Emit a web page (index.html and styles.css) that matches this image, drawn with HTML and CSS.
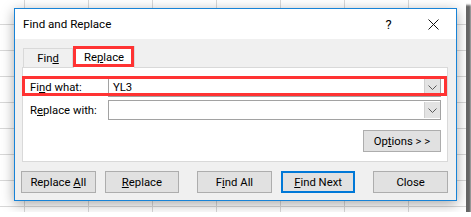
FILE: index.html
```html
<!DOCTYPE html>
<html>
<head>
<meta charset="utf-8">
<link rel="stylesheet" href="styles.css">
</head>
<body>
<div class="sheet">
  <div class="dialog">
    <div class="titlebar">
      <span class="title">Find and Replace</span>
      <span class="tbtn help">?</span>
      <span class="tbtn close"><svg width="11" height="11" viewBox="0 0 11 11"><path d="M0.5 0.5L10.5 10.5M10.5 0.5L0.5 10.5" stroke="#111" stroke-width="1" fill="none"/></svg></span>
    </div>
    <div class="content">
      <div class="tabs">
        <div class="tab"><span>Fin<u>d</u></span></div>
        <div class="tab active"><span>Re<u>p</u>lace</span></div>
      </div>
      <div class="panel">
        <div class="row hl">
          <div class="label">Fi<u>n</u>d what:</div>
          <div class="combo"><span class="val">YL3</span><span class="drop"><svg width="9" height="5" viewBox="0 0 9 5"><path d="M0.5 0.5L4.5 4.5L8.5 0.5" stroke="#5a5a5a" stroke-width="1" fill="none"/></svg></span></div>
        </div>
        <div class="row">
          <div class="label">R<u>e</u>place with:</div>
          <div class="combo"><span class="val"></span><span class="drop"><svg width="9" height="5" viewBox="0 0 9 5"><path d="M0.5 0.5L4.5 4.5L8.5 0.5" stroke="#5a5a5a" stroke-width="1" fill="none"/></svg></span></div>
        </div>
        <div class="opts"><div class="btn opt"><span>Op<u>t</u>ions &gt; &gt;</span></div></div>
      </div>
      <div class="buttons">
        <div class="btn"><span>Replace <u>A</u>ll</span></div>
        <div class="btn gs"><span><u>R</u>eplace</span></div>
        <div class="btn gl"><span>F<u>i</u>nd All</span></div>
        <div class="btn gs default"><span><u>F</u>ind Next</span></div>
        <div class="btn gl"><span>Close</span></div>
      </div>
    </div>
  </div>
</div>
</body>
</html>
```
FILE: styles.css
```css
html, body {
  margin: 0;
  background: #fff;
}
body {
  font-family: Roboto, "Noto Sans", sans-serif;
  font-size: 11.3px;
  color: #000;
}
u {
  text-decoration: underline;
  text-underline-offset: 1px;
}
.sheet {
  width: 466px;
  height: 212px;
  box-sizing: border-box;
  padding: 8px 0 0 14px;
  background-color: #fff;
  background-image:
    linear-gradient(to right, #d8d8d8 1px, transparent 1px),
    linear-gradient(to bottom, #d8d8d8 1px, transparent 1px);
  background-size: 64px 26px;
  background-position: 24px 24px;
  box-shadow: 5px 5px 2px rgba(0, 0, 0, 0.6);
}
.dialog {
  width: 443px;
  height: 193px;
  box-sizing: border-box;
  border: 1px solid #1883d7;
  background: #f0f0f0;
  box-shadow: 0 3px 12px rgba(0, 0, 0, 0.35);
  display: flex;
  flex-direction: column;
}
.titlebar {
  height: 30px;
  background: #fff;
  display: flex;
  align-items: center;
  padding-left: 8px;
}
.title {
  flex: 1;
  font-size: 11.6px;
}
.tbtn {
  width: 46px;
  height: 30px;
  display: flex;
  align-items: center;
  justify-content: center;
}
.help {
  font-size: 13px;
  padding-left: 3px;
  box-sizing: border-box;
}
.content {
  padding: 7px 8px 0 7px;
  display: flex;
  flex-direction: column;
}
.tabs {
  display: flex;
  align-items: flex-end;
  margin-left: 1px;
  margin-bottom: -1px;
  height: 22px;
  position: relative;
  z-index: 1;
}
.tab {
  width: 50px;
  height: 20px;
  box-sizing: border-box;
  border: 1px solid #d9d9d9;
  display: flex;
  align-items: center;
  justify-content: center;
  padding-top: 1px;
}
.tab.active {
  width: 62px;
  height: 22px;
  background: #fff;
  border-bottom: none;
  position: relative;
  padding-top: 0;
}
.tab.active::after {
  content: "";
  position: absolute;
  left: -1px;
  top: -1px;
  width: 61px;
  height: 21px;
  box-sizing: border-box;
  border: 3px solid #f33;
}
.panel {
  background: #fff;
  border: 1px solid #d9d9d9;
  padding: 9px 6px 9px 7px;
  display: flex;
  flex-direction: column;
}
.row {
  display: flex;
  align-items: center;
  height: 20px;
  position: relative;
}
.row + .row {
  margin-top: 3px;
}
.row.hl::after {
  content: "";
  position: absolute;
  left: -8px;
  right: -6px;
  top: -1px;
  bottom: 1px;
  border: 3px solid #f33;
}
.label {
  width: 78px;
}
.combo {
  flex: 1;
  height: 20px;
  box-sizing: border-box;
  border: 1px solid #a2a2a2;
  background: #fff;
  display: flex;
}
.val {
  flex: 1;
  padding-left: 4px;
  display: flex;
  align-items: center;
}
.drop {
  width: 15px;
  margin: 1px 0 1px 0;
  background: #e3e3e3;
  border-left: 1px solid #cfcfcf;
  display: flex;
  align-items: center;
  justify-content: center;
}
.opts {
  display: flex;
  justify-content: flex-end;
  margin-top: 10px;
}
.btn {
  width: 75px;
  height: 22px;
  box-sizing: border-box;
  border: 1px solid #adadad;
  background: #e1e1e1;
  display: flex;
  align-items: center;
  justify-content: center;
}
.btn.opt {
  width: 78px;
}
.buttons {
  display: flex;
  margin: 9px 0 0 -1px;
}
.gs {
  margin-left: 9px;
}
.gl {
  margin-left: 18px;
}
.btn.default {
  border: 2px solid #0078d7;
}
```
